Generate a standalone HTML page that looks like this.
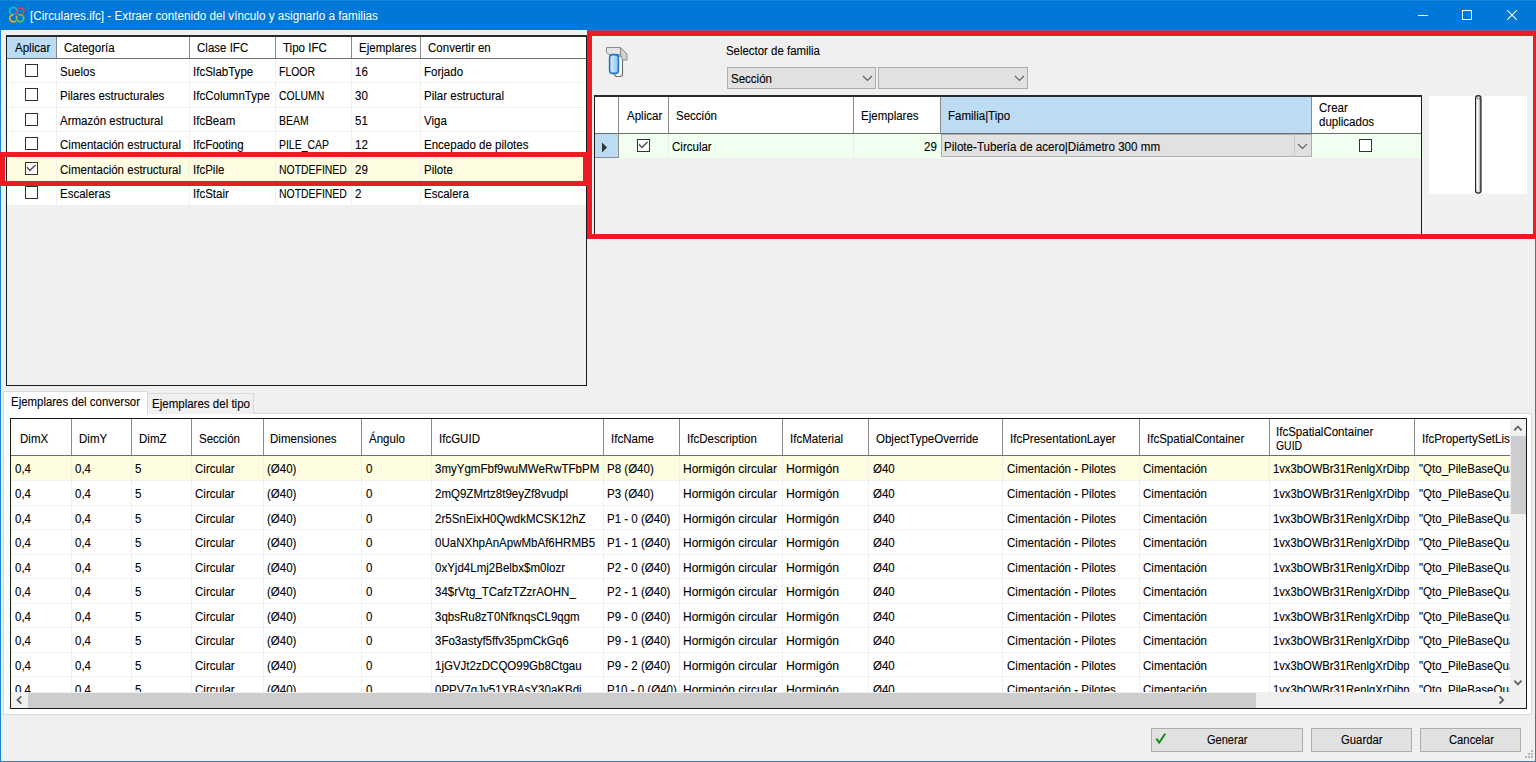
<!DOCTYPE html><html><head><meta charset="utf-8"><style>

*{box-sizing:border-box;margin:0;padding:0}
html,body{width:1536px;height:762px;overflow:hidden;background:#f0f0f0;font-family:"Liberation Sans", sans-serif;font-size:12px;color:#000}
.abs{position:absolute}
.clip{position:absolute;overflow:hidden}
.t{position:absolute;white-space:nowrap;line-height:14px;transform-origin:0 0;-webkit-text-stroke:0.1px currentColor}
.hl{position:absolute;height:1px}
.vl{position:absolute;width:1px}
.cb{position:absolute;width:13px;height:13px;border:1px solid #333;background:#fff}
.btn{position:absolute;background:#e1e1e1;border:1px solid #adadad;height:24px}

</style></head><body>
<div class="abs" style="left:0;top:0;width:1536px;height:30px;background:#0078d7"></div>
<div class="abs" style="left:0;top:0;width:1536px;height:1px;background:#1a85d9"></div>
<svg class="abs" style="left:0;top:0" width="30" height="30" viewBox="0 0 30 30"><path d="M10.64 13.41A3.6 3.6 0 1 1 15.95 13.65" fill="none" stroke="#1cb4d6" stroke-width="1.7" stroke-linecap="round"/><path d="M18.18 8.49A3.6 3.6 0 1 1 19.80 14.96" fill="none" stroke="#df3f3f" stroke-width="1.7" stroke-linecap="round"/><path d="M17.18 13.20A3.6 3.6 0 0 1 16.70 11.53" fill="none" stroke="#df3f3f" stroke-width="1.7" stroke-linecap="round"/><path d="M15.47 21.08A3.6 3.6 0 1 1 13.49 14.60" fill="none" stroke="#f0a626" stroke-width="1.7" stroke-linecap="round"/><path d="M16.42 16.40A3.6 3.6 0 0 1 16.82 17.45" fill="none" stroke="#f0a626" stroke-width="1.7" stroke-linecap="round"/><path d="M18.85 14.86A3.6 3.6 0 1 1 16.61 18.45" fill="none" stroke="#6cbf45" stroke-width="1.7" stroke-linecap="round"/></svg>
<div class="t" style="left:30.00px;top:9px;color:#fff;transform:scaleX(0.975);-webkit-text-stroke:0;">[Circulares.ifc] - Extraer contenido del vínculo y asignarlo a familias</div>
<div class="abs" style="left:1418px;top:15px;width:10px;height:1px;background:#fff"></div>
<div class="abs" style="left:1462px;top:10px;width:10px;height:10px;border:1px solid #fff"></div>
<svg class="abs" style="left:1507px;top:10px" width="10" height="10" viewBox="0 0 10 10"><path d="M0 0L10 10M10 0L0 10" stroke="#fff" stroke-width="1.1"/></svg>
<div class="abs" style="left:0;top:30px;width:1px;height:732px;background:#1883d7"></div>
<div class="abs" style="left:1535px;top:30px;width:1px;height:732px;background:#1883d7"></div>
<div class="abs" style="left:0;top:761px;width:1536px;height:1px;background:#1883d7"></div>
<div class="abs" style="left:6px;top:35px;width:581px;height:351px;background:#f0f0f0;border:1px solid #1a1a1a;border-top:2px solid #2a2a2a"></div>
<div class="abs" style="left:7px;top:37px;width:579px;height:21px;background:#fff"></div>
<div class="abs" style="left:7px;top:37px;width:49px;height:21px;background:#bcdcf4"></div>
<div class="hl" style="left:7px;top:58px;width:579px;background:#6d6d6d"></div>
<div class="vl" style="left:56px;top:37px;height:21px;background:#8a8a8a"></div>
<div class="vl" style="left:189px;top:37px;height:21px;background:#8a8a8a"></div>
<div class="vl" style="left:275px;top:37px;height:21px;background:#8a8a8a"></div>
<div class="vl" style="left:351px;top:37px;height:21px;background:#8a8a8a"></div>
<div class="vl" style="left:420px;top:37px;height:21px;background:#8a8a8a"></div>
<div class="abs" style="left:7px;top:59px;width:579px;height:23px;background:#fff"></div>
<div class="hl" style="left:7px;top:82px;width:579px;background:#f0f0f0"></div>
<div class="vl" style="left:56px;top:59px;height:23px;background:#f0f0f0"></div>
<div class="vl" style="left:189px;top:59px;height:23px;background:#f0f0f0"></div>
<div class="vl" style="left:275px;top:59px;height:23px;background:#f0f0f0"></div>
<div class="vl" style="left:351px;top:59px;height:23px;background:#f0f0f0"></div>
<div class="vl" style="left:420px;top:59px;height:23px;background:#f0f0f0"></div>
<div class="cb" style="left:25px;top:64px"></div>
<div class="abs" style="left:7px;top:83px;width:579px;height:24px;background:#fff"></div>
<div class="hl" style="left:7px;top:107px;width:579px;background:#f0f0f0"></div>
<div class="vl" style="left:56px;top:83px;height:24px;background:#f0f0f0"></div>
<div class="vl" style="left:189px;top:83px;height:24px;background:#f0f0f0"></div>
<div class="vl" style="left:275px;top:83px;height:24px;background:#f0f0f0"></div>
<div class="vl" style="left:351px;top:83px;height:24px;background:#f0f0f0"></div>
<div class="vl" style="left:420px;top:83px;height:24px;background:#f0f0f0"></div>
<div class="cb" style="left:25px;top:88px"></div>
<div class="abs" style="left:7px;top:108px;width:579px;height:23px;background:#fff"></div>
<div class="hl" style="left:7px;top:131px;width:579px;background:#f0f0f0"></div>
<div class="vl" style="left:56px;top:108px;height:23px;background:#f0f0f0"></div>
<div class="vl" style="left:189px;top:108px;height:23px;background:#f0f0f0"></div>
<div class="vl" style="left:275px;top:108px;height:23px;background:#f0f0f0"></div>
<div class="vl" style="left:351px;top:108px;height:23px;background:#f0f0f0"></div>
<div class="vl" style="left:420px;top:108px;height:23px;background:#f0f0f0"></div>
<div class="cb" style="left:25px;top:113px"></div>
<div class="abs" style="left:7px;top:132px;width:579px;height:24px;background:#fff"></div>
<div class="hl" style="left:7px;top:156px;width:579px;background:#f0f0f0"></div>
<div class="vl" style="left:56px;top:132px;height:24px;background:#f0f0f0"></div>
<div class="vl" style="left:189px;top:132px;height:24px;background:#f0f0f0"></div>
<div class="vl" style="left:275px;top:132px;height:24px;background:#f0f0f0"></div>
<div class="vl" style="left:351px;top:132px;height:24px;background:#f0f0f0"></div>
<div class="vl" style="left:420px;top:132px;height:24px;background:#f0f0f0"></div>
<div class="cb" style="left:25px;top:137px"></div>
<div class="abs" style="left:7px;top:157px;width:579px;height:23px;background:#fffde1"></div>
<div class="hl" style="left:7px;top:180px;width:579px;background:#f0f0f0"></div>
<div class="vl" style="left:56px;top:157px;height:23px;background:#f0f0f0"></div>
<div class="vl" style="left:189px;top:157px;height:23px;background:#f0f0f0"></div>
<div class="vl" style="left:275px;top:157px;height:23px;background:#f0f0f0"></div>
<div class="vl" style="left:351px;top:157px;height:23px;background:#f0f0f0"></div>
<div class="vl" style="left:420px;top:157px;height:23px;background:#f0f0f0"></div>
<div class="cb" style="left:25px;top:162px"></div>
<svg class="abs" style="left:25px;top:162px" width="13" height="13"><path d="M2 5.2L4.9 8.4L10.6 3" fill="none" stroke="#555" stroke-width="1.5"/></svg>
<div class="abs" style="left:7px;top:181px;width:579px;height:24px;background:#fff"></div>
<div class="hl" style="left:7px;top:205px;width:579px;background:#f0f0f0"></div>
<div class="vl" style="left:56px;top:181px;height:24px;background:#f0f0f0"></div>
<div class="vl" style="left:189px;top:181px;height:24px;background:#f0f0f0"></div>
<div class="vl" style="left:275px;top:181px;height:24px;background:#f0f0f0"></div>
<div class="vl" style="left:351px;top:181px;height:24px;background:#f0f0f0"></div>
<div class="vl" style="left:420px;top:181px;height:24px;background:#f0f0f0"></div>
<div class="cb" style="left:25px;top:186px"></div>
<div class="clip" style="left:7px;top:37px;width:49px;height:168px">
<div class="t" style="left:8.00px;top:4px;transform:scaleX(0.960);">Aplicar</div>
</div>
<div class="clip" style="left:56px;top:37px;width:133px;height:168px">
<div class="t" style="left:8.00px;top:4px;transform:scaleX(0.960);">Categoría</div>
<div class="t" style="left:4.00px;top:28px;transform:scaleX(0.960);">Suelos</div>
<div class="t" style="left:4.00px;top:52px;transform:scaleX(0.960);">Pilares estructurales</div>
<div class="t" style="left:4.00px;top:77px;transform:scaleX(0.960);">Armazón estructural</div>
<div class="t" style="left:4.00px;top:101px;transform:scaleX(0.960);">Cimentación estructural</div>
<div class="t" style="left:4.00px;top:126px;transform:scaleX(0.960);">Cimentación estructural</div>
<div class="t" style="left:4.00px;top:150px;transform:scaleX(0.960);">Escaleras</div>
</div>
<div class="clip" style="left:189px;top:37px;width:86px;height:168px">
<div class="t" style="left:8.00px;top:4px;transform:scaleX(0.960);">Clase IFC</div>
<div class="t" style="left:4.00px;top:28px;transform:scaleX(0.960);">IfcSlabType</div>
<div class="t" style="left:4.00px;top:52px;transform:scaleX(0.960);">IfcColumnType</div>
<div class="t" style="left:4.00px;top:77px;transform:scaleX(0.960);">IfcBeam</div>
<div class="t" style="left:4.00px;top:101px;transform:scaleX(0.960);">IfcFooting</div>
<div class="t" style="left:4.00px;top:126px;transform:scaleX(0.960);">IfcPile</div>
<div class="t" style="left:4.00px;top:150px;transform:scaleX(0.960);">IfcStair</div>
</div>
<div class="clip" style="left:275px;top:37px;width:76px;height:168px">
<div class="t" style="left:8.00px;top:4px;transform:scaleX(0.960);">Tipo IFC</div>
<div class="t" style="left:4.00px;top:28px;transform:scaleX(0.870);">FLOOR</div>
<div class="t" style="left:4.00px;top:52px;transform:scaleX(0.870);">COLUMN</div>
<div class="t" style="left:4.00px;top:77px;transform:scaleX(0.870);">BEAM</div>
<div class="t" style="left:4.00px;top:101px;transform:scaleX(0.870);">PILE_CAP</div>
<div class="t" style="left:4.00px;top:126px;transform:scaleX(0.870);">NOTDEFINED</div>
<div class="t" style="left:4.00px;top:150px;transform:scaleX(0.870);">NOTDEFINED</div>
</div>
<div class="clip" style="left:351px;top:37px;width:69px;height:168px">
<div class="t" style="left:8.00px;top:4px;transform:scaleX(0.960);">Ejemplares</div>
<div class="t" style="left:4.00px;top:28px;transform:scaleX(0.960);">16</div>
<div class="t" style="left:4.00px;top:52px;transform:scaleX(0.960);">30</div>
<div class="t" style="left:4.00px;top:77px;transform:scaleX(0.960);">51</div>
<div class="t" style="left:4.00px;top:101px;transform:scaleX(0.960);">12</div>
<div class="t" style="left:4.00px;top:126px;transform:scaleX(0.960);">29</div>
<div class="t" style="left:4.00px;top:150px;transform:scaleX(0.960);">2</div>
</div>
<div class="clip" style="left:420px;top:37px;width:166px;height:168px">
<div class="t" style="left:8.00px;top:4px;transform:scaleX(0.960);">Convertir en</div>
<div class="t" style="left:4.00px;top:28px;transform:scaleX(0.960);">Forjado</div>
<div class="t" style="left:4.00px;top:52px;transform:scaleX(0.960);">Pilar estructural</div>
<div class="t" style="left:4.00px;top:77px;transform:scaleX(0.960);">Viga</div>
<div class="t" style="left:4.00px;top:101px;transform:scaleX(0.960);">Encepado de pilotes</div>
<div class="t" style="left:4.00px;top:126px;transform:scaleX(0.960);">Pilote</div>
<div class="t" style="left:4.00px;top:150px;transform:scaleX(0.960);">Escalera</div>
</div>
<div class="abs" style="left:0;top:152px;width:588px;height:34px;border:5px solid #ed1c24"></div>
<svg class="abs" style="left:600px;top:42px" width="32" height="40" viewBox="0 0 32 40">
<defs><linearGradient id="pg" x1="0" x2="1" y1="0" y2="0"><stop offset="0" stop-color="#dff1fb"/><stop offset="0.5" stop-color="#b3daf1"/><stop offset="1" stop-color="#8cc3e8"/></linearGradient></defs>
<rect x="14.5" y="14" width="8" height="20.5" rx="2.5" fill="#f6f6f6" stroke="#6a6a6a" stroke-width="1.1"/>
<path d="M20.5 5.5 L27 12 L27 18 L22.5 18 L20.5 13 Z" fill="#d0d0d0" stroke="#8c8c8c" stroke-width="1"/>
<path d="M6.5 5.5 L20.5 5.5 L20.5 12.5 L10 13 L6.5 10.5 Z" fill="#e4e4e4" stroke="#8c8c8c" stroke-width="1"/>
<rect x="9.6" y="12.6" width="8.8" height="18.8" rx="3" fill="url(#pg)" stroke="#1f74c9" stroke-width="1.6"/>
</svg>
<div class="t" style="left:726.00px;top:44px;transform:scaleX(0.952);">Selector de familia</div>
<div class="abs" style="left:727px;top:67px;width:149px;height:22px;background:#e1e1e1;border:1px solid #adadad"></div>
<div class="t" style="left:731.00px;top:72px;transform:scaleX(0.960);">Sección</div>
<svg class="abs" style="left:862px;top:75px" width="11" height="7"><path d="M1 1L5.5 5.5L10 1" fill="none" stroke="#606060" stroke-width="1.2"/></svg>
<div class="abs" style="left:878px;top:67px;width:150px;height:22px;background:#e1e1e1;border:1px solid #adadad"></div>
<svg class="abs" style="left:1014px;top:75px" width="11" height="7"><path d="M1 1L5.5 5.5L10 1" fill="none" stroke="#606060" stroke-width="1.2"/></svg>
<div class="abs" style="left:594px;top:95px;width:828px;height:142px;background:#f0f0f0;border:1px solid #1a1a1a;border-top:2px solid #2a2a2a"></div>
<div class="abs" style="left:595px;top:97px;width:826px;height:36px;background:#fff"></div>
<div class="abs" style="left:941px;top:97px;width:370px;height:36px;background:#bcdcf4"></div>
<div class="hl" style="left:595px;top:133px;width:826px;background:#6d6d6d"></div>
<div class="vl" style="left:618px;top:97px;height:36px;background:#8a8a8a"></div>
<div class="vl" style="left:668px;top:97px;height:36px;background:#8a8a8a"></div>
<div class="vl" style="left:853px;top:97px;height:36px;background:#8a8a8a"></div>
<div class="vl" style="left:940px;top:97px;height:36px;background:#8a8a8a"></div>
<div class="vl" style="left:1311px;top:97px;height:36px;background:#8a8a8a"></div>
<div class="t" style="left:627.00px;top:109px;transform:scaleX(0.960);">Aplicar</div>
<div class="t" style="left:676.00px;top:109px;transform:scaleX(0.960);">Sección</div>
<div class="t" style="left:861.00px;top:109px;transform:scaleX(0.960);">Ejemplares</div>
<div class="t" style="left:948.00px;top:109px;transform:scaleX(0.960);">Familia|Tipo</div>
<div class="t" style="left:1319.00px;top:101px;transform:scaleX(0.960);">Crear</div>
<div class="t" style="left:1319.00px;top:115px;transform:scaleX(0.960);">duplicados</div>
<div class="abs" style="left:595px;top:134px;width:826px;height:24px;background:#f0fff0"></div>
<div class="abs" style="left:595px;top:134px;width:24px;height:24px;background:#bcdcf4;border-right:1px solid #8a8a8a;border-bottom:1px solid #8a8a8a"></div>
<svg class="abs" style="left:601px;top:142px" width="8" height="11"><path d="M1 0.5L6 5.5L1 10.5Z" fill="#333"/></svg>
<div class="vl" style="left:668px;top:134px;height:24px;background:#e6f2e6"></div>
<div class="vl" style="left:853px;top:134px;height:24px;background:#e6f2e6"></div>
<div class="cb" style="left:637px;top:139px"></div>
<svg class="abs" style="left:637px;top:139px" width="13" height="13"><path d="M2 5.2L4.9 8.4L10.6 3" fill="none" stroke="#555" stroke-width="1.5"/></svg>
<div class="t" style="left:672.00px;top:140px;transform:scaleX(0.960);">Circular</div>
<div class="t" style="left:923.67px;top:140px;transform:scaleX(0.960);">29</div>
<div class="abs" style="left:941px;top:134px;width:371px;height:23px;background:#e1e1e1;border:1px solid #adadad"></div>
<div class="abs" style="left:1294px;top:134px;width:18px;height:23px;border-left:1px solid #c8c8c8"></div>
<svg class="abs" style="left:1297px;top:143px" width="11" height="7"><path d="M1 1L5.5 5.5L10 1" fill="none" stroke="#606060" stroke-width="1.1"/></svg>
<div class="t" style="left:944.00px;top:140px;transform:scaleX(0.967);">Pilote-Tubería de acero|Diámetro 300 mm</div>
<div class="cb" style="left:1359px;top:139px"></div>
<div class="abs" style="left:1429px;top:96px;width:98px;height:98px;background:#fff"></div>
<svg class="abs" style="left:1470px;top:90px" width="16" height="108" viewBox="0 0 16 108">
<defs><linearGradient id="cg" x1="0" x2="1"><stop offset="0" stop-color="#fff"/><stop offset="0.45" stop-color="#fafafa"/><stop offset="0.85" stop-color="#a8a8a8"/><stop offset="1" stop-color="#555"/></linearGradient></defs>
<rect x="5.6" y="5.6" width="5.4" height="97.6" rx="2.7" fill="url(#cg)" stroke="#262626" stroke-width="1.2"/>
<ellipse cx="8.3" cy="7.6" rx="1.6" ry="1.3" fill="#fff" stroke="#555" stroke-width="0.9"/>
</svg>
<div class="abs" style="left:587px;top:31px;width:951px;height:208px;border:5px solid #ed1c24"></div>
<div class="abs" style="left:587px;top:30px;width:949px;height:1px;background:#9a4a8a"></div>
<div class="abs" style="left:3px;top:413px;width:1529px;height:302px;background:#fff;border:1px solid #d9d9d9"></div>
<div class="abs" style="left:147px;top:393px;width:107px;height:21px;background:#f0f0f0;border:1px solid #d9d9d9;border-bottom:none"></div>
<div class="abs" style="left:3px;top:391px;width:145px;height:24px;background:#fff;border:1px solid #d9d9d9;border-bottom:none"></div>
<div class="t" style="left:11.00px;top:395px;transform:scaleX(0.953);">Ejemplares del conversor</div>
<div class="t" style="left:152.00px;top:397px;transform:scaleX(0.960);">Ejemplares del tipo</div>
<div class="abs" style="left:10px;top:418px;width:1517px;height:291px;background:#fff;border:1px solid #1a1a1a;overflow:hidden">
<div class="hl" style="left:0;top:36px;width:1499px;background:#6d6d6d"></div>
<div class="vl" style="left:60px;top:0;height:36px;background:#8a8a8a"></div>
<div class="vl" style="left:120px;top:0;height:36px;background:#8a8a8a"></div>
<div class="vl" style="left:180px;top:0;height:36px;background:#8a8a8a"></div>
<div class="vl" style="left:252px;top:0;height:36px;background:#8a8a8a"></div>
<div class="vl" style="left:350px;top:0;height:36px;background:#8a8a8a"></div>
<div class="vl" style="left:420px;top:0;height:36px;background:#8a8a8a"></div>
<div class="vl" style="left:592px;top:0;height:36px;background:#8a8a8a"></div>
<div class="vl" style="left:668px;top:0;height:36px;background:#8a8a8a"></div>
<div class="vl" style="left:771px;top:0;height:36px;background:#8a8a8a"></div>
<div class="vl" style="left:857px;top:0;height:36px;background:#8a8a8a"></div>
<div class="vl" style="left:991px;top:0;height:36px;background:#8a8a8a"></div>
<div class="vl" style="left:1128px;top:0;height:36px;background:#8a8a8a"></div>
<div class="vl" style="left:1258px;top:0;height:36px;background:#8a8a8a"></div>
<div class="vl" style="left:1403px;top:0;height:36px;background:#8a8a8a"></div>
<div class="abs" style="left:0;top:37px;width:1499px;height:24px;background:#fffde1"></div>
<div class="hl" style="left:0;top:61px;width:1499px;background:#f0f0f0"></div>
<div class="vl" style="left:60px;top:37px;height:24px;background:#f0f0f0"></div>
<div class="vl" style="left:120px;top:37px;height:24px;background:#f0f0f0"></div>
<div class="vl" style="left:180px;top:37px;height:24px;background:#f0f0f0"></div>
<div class="vl" style="left:252px;top:37px;height:24px;background:#f0f0f0"></div>
<div class="vl" style="left:350px;top:37px;height:24px;background:#f0f0f0"></div>
<div class="vl" style="left:420px;top:37px;height:24px;background:#f0f0f0"></div>
<div class="vl" style="left:592px;top:37px;height:24px;background:#f0f0f0"></div>
<div class="vl" style="left:668px;top:37px;height:24px;background:#f0f0f0"></div>
<div class="vl" style="left:771px;top:37px;height:24px;background:#f0f0f0"></div>
<div class="vl" style="left:857px;top:37px;height:24px;background:#f0f0f0"></div>
<div class="vl" style="left:991px;top:37px;height:24px;background:#f0f0f0"></div>
<div class="vl" style="left:1128px;top:37px;height:24px;background:#f0f0f0"></div>
<div class="vl" style="left:1258px;top:37px;height:24px;background:#f0f0f0"></div>
<div class="vl" style="left:1403px;top:37px;height:24px;background:#f0f0f0"></div>
<div class="abs" style="left:0;top:62px;width:1499px;height:24px;background:#fff"></div>
<div class="hl" style="left:0;top:86px;width:1499px;background:#f0f0f0"></div>
<div class="vl" style="left:60px;top:62px;height:24px;background:#f0f0f0"></div>
<div class="vl" style="left:120px;top:62px;height:24px;background:#f0f0f0"></div>
<div class="vl" style="left:180px;top:62px;height:24px;background:#f0f0f0"></div>
<div class="vl" style="left:252px;top:62px;height:24px;background:#f0f0f0"></div>
<div class="vl" style="left:350px;top:62px;height:24px;background:#f0f0f0"></div>
<div class="vl" style="left:420px;top:62px;height:24px;background:#f0f0f0"></div>
<div class="vl" style="left:592px;top:62px;height:24px;background:#f0f0f0"></div>
<div class="vl" style="left:668px;top:62px;height:24px;background:#f0f0f0"></div>
<div class="vl" style="left:771px;top:62px;height:24px;background:#f0f0f0"></div>
<div class="vl" style="left:857px;top:62px;height:24px;background:#f0f0f0"></div>
<div class="vl" style="left:991px;top:62px;height:24px;background:#f0f0f0"></div>
<div class="vl" style="left:1128px;top:62px;height:24px;background:#f0f0f0"></div>
<div class="vl" style="left:1258px;top:62px;height:24px;background:#f0f0f0"></div>
<div class="vl" style="left:1403px;top:62px;height:24px;background:#f0f0f0"></div>
<div class="abs" style="left:0;top:87px;width:1499px;height:23px;background:#fff"></div>
<div class="hl" style="left:0;top:110px;width:1499px;background:#f0f0f0"></div>
<div class="vl" style="left:60px;top:87px;height:23px;background:#f0f0f0"></div>
<div class="vl" style="left:120px;top:87px;height:23px;background:#f0f0f0"></div>
<div class="vl" style="left:180px;top:87px;height:23px;background:#f0f0f0"></div>
<div class="vl" style="left:252px;top:87px;height:23px;background:#f0f0f0"></div>
<div class="vl" style="left:350px;top:87px;height:23px;background:#f0f0f0"></div>
<div class="vl" style="left:420px;top:87px;height:23px;background:#f0f0f0"></div>
<div class="vl" style="left:592px;top:87px;height:23px;background:#f0f0f0"></div>
<div class="vl" style="left:668px;top:87px;height:23px;background:#f0f0f0"></div>
<div class="vl" style="left:771px;top:87px;height:23px;background:#f0f0f0"></div>
<div class="vl" style="left:857px;top:87px;height:23px;background:#f0f0f0"></div>
<div class="vl" style="left:991px;top:87px;height:23px;background:#f0f0f0"></div>
<div class="vl" style="left:1128px;top:87px;height:23px;background:#f0f0f0"></div>
<div class="vl" style="left:1258px;top:87px;height:23px;background:#f0f0f0"></div>
<div class="vl" style="left:1403px;top:87px;height:23px;background:#f0f0f0"></div>
<div class="abs" style="left:0;top:111px;width:1499px;height:24px;background:#fff"></div>
<div class="hl" style="left:0;top:135px;width:1499px;background:#f0f0f0"></div>
<div class="vl" style="left:60px;top:111px;height:24px;background:#f0f0f0"></div>
<div class="vl" style="left:120px;top:111px;height:24px;background:#f0f0f0"></div>
<div class="vl" style="left:180px;top:111px;height:24px;background:#f0f0f0"></div>
<div class="vl" style="left:252px;top:111px;height:24px;background:#f0f0f0"></div>
<div class="vl" style="left:350px;top:111px;height:24px;background:#f0f0f0"></div>
<div class="vl" style="left:420px;top:111px;height:24px;background:#f0f0f0"></div>
<div class="vl" style="left:592px;top:111px;height:24px;background:#f0f0f0"></div>
<div class="vl" style="left:668px;top:111px;height:24px;background:#f0f0f0"></div>
<div class="vl" style="left:771px;top:111px;height:24px;background:#f0f0f0"></div>
<div class="vl" style="left:857px;top:111px;height:24px;background:#f0f0f0"></div>
<div class="vl" style="left:991px;top:111px;height:24px;background:#f0f0f0"></div>
<div class="vl" style="left:1128px;top:111px;height:24px;background:#f0f0f0"></div>
<div class="vl" style="left:1258px;top:111px;height:24px;background:#f0f0f0"></div>
<div class="vl" style="left:1403px;top:111px;height:24px;background:#f0f0f0"></div>
<div class="abs" style="left:0;top:136px;width:1499px;height:23px;background:#fff"></div>
<div class="hl" style="left:0;top:159px;width:1499px;background:#f0f0f0"></div>
<div class="vl" style="left:60px;top:136px;height:23px;background:#f0f0f0"></div>
<div class="vl" style="left:120px;top:136px;height:23px;background:#f0f0f0"></div>
<div class="vl" style="left:180px;top:136px;height:23px;background:#f0f0f0"></div>
<div class="vl" style="left:252px;top:136px;height:23px;background:#f0f0f0"></div>
<div class="vl" style="left:350px;top:136px;height:23px;background:#f0f0f0"></div>
<div class="vl" style="left:420px;top:136px;height:23px;background:#f0f0f0"></div>
<div class="vl" style="left:592px;top:136px;height:23px;background:#f0f0f0"></div>
<div class="vl" style="left:668px;top:136px;height:23px;background:#f0f0f0"></div>
<div class="vl" style="left:771px;top:136px;height:23px;background:#f0f0f0"></div>
<div class="vl" style="left:857px;top:136px;height:23px;background:#f0f0f0"></div>
<div class="vl" style="left:991px;top:136px;height:23px;background:#f0f0f0"></div>
<div class="vl" style="left:1128px;top:136px;height:23px;background:#f0f0f0"></div>
<div class="vl" style="left:1258px;top:136px;height:23px;background:#f0f0f0"></div>
<div class="vl" style="left:1403px;top:136px;height:23px;background:#f0f0f0"></div>
<div class="abs" style="left:0;top:160px;width:1499px;height:24px;background:#fff"></div>
<div class="hl" style="left:0;top:184px;width:1499px;background:#f0f0f0"></div>
<div class="vl" style="left:60px;top:160px;height:24px;background:#f0f0f0"></div>
<div class="vl" style="left:120px;top:160px;height:24px;background:#f0f0f0"></div>
<div class="vl" style="left:180px;top:160px;height:24px;background:#f0f0f0"></div>
<div class="vl" style="left:252px;top:160px;height:24px;background:#f0f0f0"></div>
<div class="vl" style="left:350px;top:160px;height:24px;background:#f0f0f0"></div>
<div class="vl" style="left:420px;top:160px;height:24px;background:#f0f0f0"></div>
<div class="vl" style="left:592px;top:160px;height:24px;background:#f0f0f0"></div>
<div class="vl" style="left:668px;top:160px;height:24px;background:#f0f0f0"></div>
<div class="vl" style="left:771px;top:160px;height:24px;background:#f0f0f0"></div>
<div class="vl" style="left:857px;top:160px;height:24px;background:#f0f0f0"></div>
<div class="vl" style="left:991px;top:160px;height:24px;background:#f0f0f0"></div>
<div class="vl" style="left:1128px;top:160px;height:24px;background:#f0f0f0"></div>
<div class="vl" style="left:1258px;top:160px;height:24px;background:#f0f0f0"></div>
<div class="vl" style="left:1403px;top:160px;height:24px;background:#f0f0f0"></div>
<div class="abs" style="left:0;top:185px;width:1499px;height:23px;background:#fff"></div>
<div class="hl" style="left:0;top:208px;width:1499px;background:#f0f0f0"></div>
<div class="vl" style="left:60px;top:185px;height:23px;background:#f0f0f0"></div>
<div class="vl" style="left:120px;top:185px;height:23px;background:#f0f0f0"></div>
<div class="vl" style="left:180px;top:185px;height:23px;background:#f0f0f0"></div>
<div class="vl" style="left:252px;top:185px;height:23px;background:#f0f0f0"></div>
<div class="vl" style="left:350px;top:185px;height:23px;background:#f0f0f0"></div>
<div class="vl" style="left:420px;top:185px;height:23px;background:#f0f0f0"></div>
<div class="vl" style="left:592px;top:185px;height:23px;background:#f0f0f0"></div>
<div class="vl" style="left:668px;top:185px;height:23px;background:#f0f0f0"></div>
<div class="vl" style="left:771px;top:185px;height:23px;background:#f0f0f0"></div>
<div class="vl" style="left:857px;top:185px;height:23px;background:#f0f0f0"></div>
<div class="vl" style="left:991px;top:185px;height:23px;background:#f0f0f0"></div>
<div class="vl" style="left:1128px;top:185px;height:23px;background:#f0f0f0"></div>
<div class="vl" style="left:1258px;top:185px;height:23px;background:#f0f0f0"></div>
<div class="vl" style="left:1403px;top:185px;height:23px;background:#f0f0f0"></div>
<div class="abs" style="left:0;top:209px;width:1499px;height:24px;background:#fff"></div>
<div class="hl" style="left:0;top:233px;width:1499px;background:#f0f0f0"></div>
<div class="vl" style="left:60px;top:209px;height:24px;background:#f0f0f0"></div>
<div class="vl" style="left:120px;top:209px;height:24px;background:#f0f0f0"></div>
<div class="vl" style="left:180px;top:209px;height:24px;background:#f0f0f0"></div>
<div class="vl" style="left:252px;top:209px;height:24px;background:#f0f0f0"></div>
<div class="vl" style="left:350px;top:209px;height:24px;background:#f0f0f0"></div>
<div class="vl" style="left:420px;top:209px;height:24px;background:#f0f0f0"></div>
<div class="vl" style="left:592px;top:209px;height:24px;background:#f0f0f0"></div>
<div class="vl" style="left:668px;top:209px;height:24px;background:#f0f0f0"></div>
<div class="vl" style="left:771px;top:209px;height:24px;background:#f0f0f0"></div>
<div class="vl" style="left:857px;top:209px;height:24px;background:#f0f0f0"></div>
<div class="vl" style="left:991px;top:209px;height:24px;background:#f0f0f0"></div>
<div class="vl" style="left:1128px;top:209px;height:24px;background:#f0f0f0"></div>
<div class="vl" style="left:1258px;top:209px;height:24px;background:#f0f0f0"></div>
<div class="vl" style="left:1403px;top:209px;height:24px;background:#f0f0f0"></div>
<div class="abs" style="left:0;top:234px;width:1499px;height:23px;background:#fff"></div>
<div class="hl" style="left:0;top:257px;width:1499px;background:#f0f0f0"></div>
<div class="vl" style="left:60px;top:234px;height:23px;background:#f0f0f0"></div>
<div class="vl" style="left:120px;top:234px;height:23px;background:#f0f0f0"></div>
<div class="vl" style="left:180px;top:234px;height:23px;background:#f0f0f0"></div>
<div class="vl" style="left:252px;top:234px;height:23px;background:#f0f0f0"></div>
<div class="vl" style="left:350px;top:234px;height:23px;background:#f0f0f0"></div>
<div class="vl" style="left:420px;top:234px;height:23px;background:#f0f0f0"></div>
<div class="vl" style="left:592px;top:234px;height:23px;background:#f0f0f0"></div>
<div class="vl" style="left:668px;top:234px;height:23px;background:#f0f0f0"></div>
<div class="vl" style="left:771px;top:234px;height:23px;background:#f0f0f0"></div>
<div class="vl" style="left:857px;top:234px;height:23px;background:#f0f0f0"></div>
<div class="vl" style="left:991px;top:234px;height:23px;background:#f0f0f0"></div>
<div class="vl" style="left:1128px;top:234px;height:23px;background:#f0f0f0"></div>
<div class="vl" style="left:1258px;top:234px;height:23px;background:#f0f0f0"></div>
<div class="vl" style="left:1403px;top:234px;height:23px;background:#f0f0f0"></div>
<div class="abs" style="left:0;top:258px;width:1499px;height:24px;background:#fff"></div>
<div class="hl" style="left:0;top:282px;width:1499px;background:#f0f0f0"></div>
<div class="vl" style="left:60px;top:258px;height:24px;background:#f0f0f0"></div>
<div class="vl" style="left:120px;top:258px;height:24px;background:#f0f0f0"></div>
<div class="vl" style="left:180px;top:258px;height:24px;background:#f0f0f0"></div>
<div class="vl" style="left:252px;top:258px;height:24px;background:#f0f0f0"></div>
<div class="vl" style="left:350px;top:258px;height:24px;background:#f0f0f0"></div>
<div class="vl" style="left:420px;top:258px;height:24px;background:#f0f0f0"></div>
<div class="vl" style="left:592px;top:258px;height:24px;background:#f0f0f0"></div>
<div class="vl" style="left:668px;top:258px;height:24px;background:#f0f0f0"></div>
<div class="vl" style="left:771px;top:258px;height:24px;background:#f0f0f0"></div>
<div class="vl" style="left:857px;top:258px;height:24px;background:#f0f0f0"></div>
<div class="vl" style="left:991px;top:258px;height:24px;background:#f0f0f0"></div>
<div class="vl" style="left:1128px;top:258px;height:24px;background:#f0f0f0"></div>
<div class="vl" style="left:1258px;top:258px;height:24px;background:#f0f0f0"></div>
<div class="vl" style="left:1403px;top:258px;height:24px;background:#f0f0f0"></div>
<div class="abs" style="left:0;top:283px;width:1499px;height:24px;background:#fff"></div>
<div class="hl" style="left:0;top:307px;width:1499px;background:#f0f0f0"></div>
<div class="vl" style="left:60px;top:283px;height:24px;background:#f0f0f0"></div>
<div class="vl" style="left:120px;top:283px;height:24px;background:#f0f0f0"></div>
<div class="vl" style="left:180px;top:283px;height:24px;background:#f0f0f0"></div>
<div class="vl" style="left:252px;top:283px;height:24px;background:#f0f0f0"></div>
<div class="vl" style="left:350px;top:283px;height:24px;background:#f0f0f0"></div>
<div class="vl" style="left:420px;top:283px;height:24px;background:#f0f0f0"></div>
<div class="vl" style="left:592px;top:283px;height:24px;background:#f0f0f0"></div>
<div class="vl" style="left:668px;top:283px;height:24px;background:#f0f0f0"></div>
<div class="vl" style="left:771px;top:283px;height:24px;background:#f0f0f0"></div>
<div class="vl" style="left:857px;top:283px;height:24px;background:#f0f0f0"></div>
<div class="vl" style="left:991px;top:283px;height:24px;background:#f0f0f0"></div>
<div class="vl" style="left:1128px;top:283px;height:24px;background:#f0f0f0"></div>
<div class="vl" style="left:1258px;top:283px;height:24px;background:#f0f0f0"></div>
<div class="vl" style="left:1403px;top:283px;height:24px;background:#f0f0f0"></div>
<div class="clip" style="left:0px;top:0;width:60px;height:273px">
<div class="t" style="left:9.00px;top:13px;transform:scaleX(0.960);">DimX</div>
<div class="t" style="left:4.00px;top:43px;transform:scaleX(0.960);">0,4</div>
<div class="t" style="left:4.00px;top:68px;transform:scaleX(0.960);">0,4</div>
<div class="t" style="left:4.00px;top:93px;transform:scaleX(0.960);">0,4</div>
<div class="t" style="left:4.00px;top:117px;transform:scaleX(0.960);">0,4</div>
<div class="t" style="left:4.00px;top:142px;transform:scaleX(0.960);">0,4</div>
<div class="t" style="left:4.00px;top:166px;transform:scaleX(0.960);">0,4</div>
<div class="t" style="left:4.00px;top:191px;transform:scaleX(0.960);">0,4</div>
<div class="t" style="left:4.00px;top:215px;transform:scaleX(0.960);">0,4</div>
<div class="t" style="left:4.00px;top:240px;transform:scaleX(0.960);">0,4</div>
<div class="t" style="left:4.00px;top:264px;transform:scaleX(0.960);">0,4</div>
</div>
<div class="clip" style="left:60px;top:0;width:60px;height:273px">
<div class="t" style="left:8.00px;top:13px;transform:scaleX(0.960);">DimY</div>
<div class="t" style="left:4.00px;top:43px;transform:scaleX(0.960);">0,4</div>
<div class="t" style="left:4.00px;top:68px;transform:scaleX(0.960);">0,4</div>
<div class="t" style="left:4.00px;top:93px;transform:scaleX(0.960);">0,4</div>
<div class="t" style="left:4.00px;top:117px;transform:scaleX(0.960);">0,4</div>
<div class="t" style="left:4.00px;top:142px;transform:scaleX(0.960);">0,4</div>
<div class="t" style="left:4.00px;top:166px;transform:scaleX(0.960);">0,4</div>
<div class="t" style="left:4.00px;top:191px;transform:scaleX(0.960);">0,4</div>
<div class="t" style="left:4.00px;top:215px;transform:scaleX(0.960);">0,4</div>
<div class="t" style="left:4.00px;top:240px;transform:scaleX(0.960);">0,4</div>
<div class="t" style="left:4.00px;top:264px;transform:scaleX(0.960);">0,4</div>
</div>
<div class="clip" style="left:120px;top:0;width:60px;height:273px">
<div class="t" style="left:8.00px;top:13px;transform:scaleX(0.960);">DimZ</div>
<div class="t" style="left:4.00px;top:43px;transform:scaleX(0.960);">5</div>
<div class="t" style="left:4.00px;top:68px;transform:scaleX(0.960);">5</div>
<div class="t" style="left:4.00px;top:93px;transform:scaleX(0.960);">5</div>
<div class="t" style="left:4.00px;top:117px;transform:scaleX(0.960);">5</div>
<div class="t" style="left:4.00px;top:142px;transform:scaleX(0.960);">5</div>
<div class="t" style="left:4.00px;top:166px;transform:scaleX(0.960);">5</div>
<div class="t" style="left:4.00px;top:191px;transform:scaleX(0.960);">5</div>
<div class="t" style="left:4.00px;top:215px;transform:scaleX(0.960);">5</div>
<div class="t" style="left:4.00px;top:240px;transform:scaleX(0.960);">5</div>
<div class="t" style="left:4.00px;top:264px;transform:scaleX(0.960);">5</div>
</div>
<div class="clip" style="left:180px;top:0;width:72px;height:273px">
<div class="t" style="left:8.00px;top:13px;transform:scaleX(0.960);">Sección</div>
<div class="t" style="left:4.00px;top:43px;transform:scaleX(0.960);">Circular</div>
<div class="t" style="left:4.00px;top:68px;transform:scaleX(0.960);">Circular</div>
<div class="t" style="left:4.00px;top:93px;transform:scaleX(0.960);">Circular</div>
<div class="t" style="left:4.00px;top:117px;transform:scaleX(0.960);">Circular</div>
<div class="t" style="left:4.00px;top:142px;transform:scaleX(0.960);">Circular</div>
<div class="t" style="left:4.00px;top:166px;transform:scaleX(0.960);">Circular</div>
<div class="t" style="left:4.00px;top:191px;transform:scaleX(0.960);">Circular</div>
<div class="t" style="left:4.00px;top:215px;transform:scaleX(0.960);">Circular</div>
<div class="t" style="left:4.00px;top:240px;transform:scaleX(0.960);">Circular</div>
<div class="t" style="left:4.00px;top:264px;transform:scaleX(0.960);">Circular</div>
</div>
<div class="clip" style="left:252px;top:0;width:98px;height:273px">
<div class="t" style="left:7.00px;top:13px;transform:scaleX(0.960);">Dimensiones</div>
<div class="t" style="left:4.00px;top:43px;transform:scaleX(0.960);">(Ø40)</div>
<div class="t" style="left:4.00px;top:68px;transform:scaleX(0.960);">(Ø40)</div>
<div class="t" style="left:4.00px;top:93px;transform:scaleX(0.960);">(Ø40)</div>
<div class="t" style="left:4.00px;top:117px;transform:scaleX(0.960);">(Ø40)</div>
<div class="t" style="left:4.00px;top:142px;transform:scaleX(0.960);">(Ø40)</div>
<div class="t" style="left:4.00px;top:166px;transform:scaleX(0.960);">(Ø40)</div>
<div class="t" style="left:4.00px;top:191px;transform:scaleX(0.960);">(Ø40)</div>
<div class="t" style="left:4.00px;top:215px;transform:scaleX(0.960);">(Ø40)</div>
<div class="t" style="left:4.00px;top:240px;transform:scaleX(0.960);">(Ø40)</div>
<div class="t" style="left:4.00px;top:264px;transform:scaleX(0.960);">(Ø40)</div>
</div>
<div class="clip" style="left:350px;top:0;width:70px;height:273px">
<div class="t" style="left:8.00px;top:13px;transform:scaleX(0.960);">Ángulo</div>
<div class="t" style="left:5.00px;top:43px;transform:scaleX(0.960);">0</div>
<div class="t" style="left:5.00px;top:68px;transform:scaleX(0.960);">0</div>
<div class="t" style="left:5.00px;top:93px;transform:scaleX(0.960);">0</div>
<div class="t" style="left:5.00px;top:117px;transform:scaleX(0.960);">0</div>
<div class="t" style="left:5.00px;top:142px;transform:scaleX(0.960);">0</div>
<div class="t" style="left:5.00px;top:166px;transform:scaleX(0.960);">0</div>
<div class="t" style="left:5.00px;top:191px;transform:scaleX(0.960);">0</div>
<div class="t" style="left:5.00px;top:215px;transform:scaleX(0.960);">0</div>
<div class="t" style="left:5.00px;top:240px;transform:scaleX(0.960);">0</div>
<div class="t" style="left:5.00px;top:264px;transform:scaleX(0.960);">0</div>
</div>
<div class="clip" style="left:420px;top:0;width:172px;height:273px">
<div class="t" style="left:8.00px;top:13px;transform:scaleX(0.960);">IfcGUID</div>
<div class="t" style="left:4.00px;top:43px;transform:scaleX(0.960);">3myYgmFbf9wuMWeRwTFbPM</div>
<div class="t" style="left:4.00px;top:68px;transform:scaleX(0.960);">2mQ9ZMrtz8t9eyZf8vudpl</div>
<div class="t" style="left:4.00px;top:93px;transform:scaleX(0.960);">2r5SnEixH0QwdkMCSK12hZ</div>
<div class="t" style="left:4.00px;top:117px;transform:scaleX(0.960);">0UaNXhpAnApwMbAf6HRMB5</div>
<div class="t" style="left:4.00px;top:142px;transform:scaleX(0.960);">0xYjd4Lmj2Belbx$m0lozr</div>
<div class="t" style="left:4.00px;top:166px;transform:scaleX(0.960);">34$rVtg_TCafzTZzrAOHN_</div>
<div class="t" style="left:4.00px;top:191px;transform:scaleX(0.960);">3qbsRu8zT0NfknqsCL9qgm</div>
<div class="t" style="left:4.00px;top:215px;transform:scaleX(0.960);">3Fo3astyf5ffv35pmCkGq6</div>
<div class="t" style="left:4.00px;top:240px;transform:scaleX(0.960);">1jGVJt2zDCQO99Gb8Ctgau</div>
<div class="t" style="left:4.00px;top:264px;transform:scaleX(0.960);">0PPV7qJv51YBAsY30aKBdi</div>
</div>
<div class="clip" style="left:592px;top:0;width:76px;height:273px">
<div class="t" style="left:8.00px;top:13px;transform:scaleX(0.960);">IfcName</div>
<div class="t" style="left:4.00px;top:43px;transform:scaleX(0.960);">P8 (Ø40)</div>
<div class="t" style="left:4.00px;top:68px;transform:scaleX(0.960);">P3 (Ø40)</div>
<div class="t" style="left:4.00px;top:93px;transform:scaleX(0.960);">P1 - 0 (Ø40)</div>
<div class="t" style="left:4.00px;top:117px;transform:scaleX(0.960);">P1 - 1 (Ø40)</div>
<div class="t" style="left:4.00px;top:142px;transform:scaleX(0.960);">P2 - 0 (Ø40)</div>
<div class="t" style="left:4.00px;top:166px;transform:scaleX(0.960);">P2 - 1 (Ø40)</div>
<div class="t" style="left:4.00px;top:191px;transform:scaleX(0.960);">P9 - 0 (Ø40)</div>
<div class="t" style="left:4.00px;top:215px;transform:scaleX(0.960);">P9 - 1 (Ø40)</div>
<div class="t" style="left:4.00px;top:240px;transform:scaleX(0.960);">P9 - 2 (Ø40)</div>
<div class="t" style="left:4.00px;top:264px;transform:scaleX(0.960);">P10 - 0 (Ø40)</div>
</div>
<div class="clip" style="left:668px;top:0;width:103px;height:273px">
<div class="t" style="left:8.00px;top:13px;transform:scaleX(0.960);">IfcDescription</div>
<div class="t" style="left:4.00px;top:43px;">Hormigón circular</div>
<div class="t" style="left:4.00px;top:68px;">Hormigón circular</div>
<div class="t" style="left:4.00px;top:93px;">Hormigón circular</div>
<div class="t" style="left:4.00px;top:117px;">Hormigón circular</div>
<div class="t" style="left:4.00px;top:142px;">Hormigón circular</div>
<div class="t" style="left:4.00px;top:166px;">Hormigón circular</div>
<div class="t" style="left:4.00px;top:191px;">Hormigón circular</div>
<div class="t" style="left:4.00px;top:215px;">Hormigón circular</div>
<div class="t" style="left:4.00px;top:240px;">Hormigón circular</div>
<div class="t" style="left:4.00px;top:264px;">Hormigón circular</div>
</div>
<div class="clip" style="left:771px;top:0;width:86px;height:273px">
<div class="t" style="left:8.00px;top:13px;transform:scaleX(0.960);">IfcMaterial</div>
<div class="t" style="left:4.00px;top:43px;transform:scaleX(1.020);">Hormigón</div>
<div class="t" style="left:4.00px;top:68px;transform:scaleX(1.020);">Hormigón</div>
<div class="t" style="left:4.00px;top:93px;transform:scaleX(1.020);">Hormigón</div>
<div class="t" style="left:4.00px;top:117px;transform:scaleX(1.020);">Hormigón</div>
<div class="t" style="left:4.00px;top:142px;transform:scaleX(1.020);">Hormigón</div>
<div class="t" style="left:4.00px;top:166px;transform:scaleX(1.020);">Hormigón</div>
<div class="t" style="left:4.00px;top:191px;transform:scaleX(1.020);">Hormigón</div>
<div class="t" style="left:4.00px;top:215px;transform:scaleX(1.020);">Hormigón</div>
<div class="t" style="left:4.00px;top:240px;transform:scaleX(1.020);">Hormigón</div>
<div class="t" style="left:4.00px;top:264px;transform:scaleX(1.020);">Hormigón</div>
</div>
<div class="clip" style="left:857px;top:0;width:134px;height:273px">
<div class="t" style="left:8.00px;top:13px;transform:scaleX(0.960);">ObjectTypeOverride</div>
<div class="t" style="left:5.00px;top:43px;transform:scaleX(0.960);">Ø40</div>
<div class="t" style="left:5.00px;top:68px;transform:scaleX(0.960);">Ø40</div>
<div class="t" style="left:5.00px;top:93px;transform:scaleX(0.960);">Ø40</div>
<div class="t" style="left:5.00px;top:117px;transform:scaleX(0.960);">Ø40</div>
<div class="t" style="left:5.00px;top:142px;transform:scaleX(0.960);">Ø40</div>
<div class="t" style="left:5.00px;top:166px;transform:scaleX(0.960);">Ø40</div>
<div class="t" style="left:5.00px;top:191px;transform:scaleX(0.960);">Ø40</div>
<div class="t" style="left:5.00px;top:215px;transform:scaleX(0.960);">Ø40</div>
<div class="t" style="left:5.00px;top:240px;transform:scaleX(0.960);">Ø40</div>
<div class="t" style="left:5.00px;top:264px;transform:scaleX(0.960);">Ø40</div>
</div>
<div class="clip" style="left:991px;top:0;width:137px;height:273px">
<div class="t" style="left:8.00px;top:13px;transform:scaleX(0.960);">IfcPresentationLayer</div>
<div class="t" style="left:5.00px;top:43px;transform:scaleX(0.960);">Cimentación - Pilotes</div>
<div class="t" style="left:5.00px;top:68px;transform:scaleX(0.960);">Cimentación - Pilotes</div>
<div class="t" style="left:5.00px;top:93px;transform:scaleX(0.960);">Cimentación - Pilotes</div>
<div class="t" style="left:5.00px;top:117px;transform:scaleX(0.960);">Cimentación - Pilotes</div>
<div class="t" style="left:5.00px;top:142px;transform:scaleX(0.960);">Cimentación - Pilotes</div>
<div class="t" style="left:5.00px;top:166px;transform:scaleX(0.960);">Cimentación - Pilotes</div>
<div class="t" style="left:5.00px;top:191px;transform:scaleX(0.960);">Cimentación - Pilotes</div>
<div class="t" style="left:5.00px;top:215px;transform:scaleX(0.960);">Cimentación - Pilotes</div>
<div class="t" style="left:5.00px;top:240px;transform:scaleX(0.960);">Cimentación - Pilotes</div>
<div class="t" style="left:5.00px;top:264px;transform:scaleX(0.960);">Cimentación - Pilotes</div>
</div>
<div class="clip" style="left:1128px;top:0;width:130px;height:273px">
<div class="t" style="left:8.00px;top:13px;transform:scaleX(0.960);">IfcSpatialContainer</div>
<div class="t" style="left:4.00px;top:43px;transform:scaleX(0.960);">Cimentación</div>
<div class="t" style="left:4.00px;top:68px;transform:scaleX(0.960);">Cimentación</div>
<div class="t" style="left:4.00px;top:93px;transform:scaleX(0.960);">Cimentación</div>
<div class="t" style="left:4.00px;top:117px;transform:scaleX(0.960);">Cimentación</div>
<div class="t" style="left:4.00px;top:142px;transform:scaleX(0.960);">Cimentación</div>
<div class="t" style="left:4.00px;top:166px;transform:scaleX(0.960);">Cimentación</div>
<div class="t" style="left:4.00px;top:191px;transform:scaleX(0.960);">Cimentación</div>
<div class="t" style="left:4.00px;top:215px;transform:scaleX(0.960);">Cimentación</div>
<div class="t" style="left:4.00px;top:240px;transform:scaleX(0.960);">Cimentación</div>
<div class="t" style="left:4.00px;top:264px;transform:scaleX(0.960);">Cimentación</div>
</div>
<div class="clip" style="left:1258px;top:0;width:145px;height:273px">
<div class="t" style="left:7.00px;top:6px;transform:scaleX(0.960);">IfcSpatialContainer</div>
<div class="t" style="left:7.00px;top:20px;transform:scaleX(0.870);">GUID</div>
<div class="t" style="left:4.00px;top:43px;transform:scaleX(0.935);">1vx3bOWBr31RenlgXrDibp</div>
<div class="t" style="left:4.00px;top:68px;transform:scaleX(0.935);">1vx3bOWBr31RenlgXrDibp</div>
<div class="t" style="left:4.00px;top:93px;transform:scaleX(0.935);">1vx3bOWBr31RenlgXrDibp</div>
<div class="t" style="left:4.00px;top:117px;transform:scaleX(0.935);">1vx3bOWBr31RenlgXrDibp</div>
<div class="t" style="left:4.00px;top:142px;transform:scaleX(0.935);">1vx3bOWBr31RenlgXrDibp</div>
<div class="t" style="left:4.00px;top:166px;transform:scaleX(0.935);">1vx3bOWBr31RenlgXrDibp</div>
<div class="t" style="left:4.00px;top:191px;transform:scaleX(0.935);">1vx3bOWBr31RenlgXrDibp</div>
<div class="t" style="left:4.00px;top:215px;transform:scaleX(0.935);">1vx3bOWBr31RenlgXrDibp</div>
<div class="t" style="left:4.00px;top:240px;transform:scaleX(0.935);">1vx3bOWBr31RenlgXrDibp</div>
<div class="t" style="left:4.00px;top:264px;transform:scaleX(0.935);">1vx3bOWBr31RenlgXrDibp</div>
</div>
<div class="clip" style="left:1403px;top:0;width:96px;height:273px">
<div class="t" style="left:8.00px;top:13px;transform:scaleX(0.960);">IfcPropertySetList</div>
<div class="t" style="left:5.00px;top:43px;transform:scaleX(0.960);">"Qto_PileBaseQuantities"</div>
<div class="t" style="left:5.00px;top:68px;transform:scaleX(0.960);">"Qto_PileBaseQuantities"</div>
<div class="t" style="left:5.00px;top:93px;transform:scaleX(0.960);">"Qto_PileBaseQuantities"</div>
<div class="t" style="left:5.00px;top:117px;transform:scaleX(0.960);">"Qto_PileBaseQuantities"</div>
<div class="t" style="left:5.00px;top:142px;transform:scaleX(0.960);">"Qto_PileBaseQuantities"</div>
<div class="t" style="left:5.00px;top:166px;transform:scaleX(0.960);">"Qto_PileBaseQuantities"</div>
<div class="t" style="left:5.00px;top:191px;transform:scaleX(0.960);">"Qto_PileBaseQuantities"</div>
<div class="t" style="left:5.00px;top:215px;transform:scaleX(0.960);">"Qto_PileBaseQuantities"</div>
<div class="t" style="left:5.00px;top:240px;transform:scaleX(0.960);">"Qto_PileBaseQuantities"</div>
<div class="t" style="left:5.00px;top:264px;transform:scaleX(0.960);">"Qto_PileBaseQuantities"</div>
</div>
<div class="abs" style="left:1499px;top:0;width:17px;height:273px;background:#f0f0f0"></div>
<div class="abs" style="left:1500px;top:17px;width:15px;height:78px;background:#cdcdcd"></div>
<svg class="abs" style="left:1502px;top:5px" width="10" height="8"><path d="M1.3 6.3L4.9 2.5L8.5 6.3" fill="none" stroke="#606060" stroke-width="1.8"/></svg>
<svg class="abs" style="left:1502px;top:260px" width="10" height="8"><path d="M1.3 1.6L4.9 5.4L8.5 1.6" fill="none" stroke="#606060" stroke-width="1.8"/></svg>
<div class="abs" style="left:0;top:273px;width:1516px;height:17px;background:#f0f0f0"></div>
<div class="abs" style="left:17px;top:274px;width:1228px;height:15px;background:#cdcdcd"></div>
<svg class="abs" style="left:4px;top:276px" width="8" height="10"><path d="M6.2 1.3L2.5 4.9L6.2 8.5" fill="none" stroke="#606060" stroke-width="1.8"/></svg>
<svg class="abs" style="left:1487px;top:276px" width="8" height="10"><path d="M1.5 1.3L5.2 4.9L1.5 8.5" fill="none" stroke="#606060" stroke-width="1.8"/></svg>
</div>
<div class="btn" style="left:1151px;top:728px;width:152px"></div>
<svg class="abs" style="left:1155px;top:732px" width="12" height="13"><path d="M1.3 6.6L4.2 10.6L10.2 1.8" fill="none" stroke="#178c17" stroke-width="2"/></svg>
<div class="t" style="left:1207.00px;top:733px;transform:scaleX(0.920);">Generar</div>
<div class="btn" style="left:1311px;top:728px;width:101px"></div>
<div class="t" style="left:1341.00px;top:733px;transform:scaleX(0.943);">Guardar</div>
<div class="btn" style="left:1420px;top:728px;width:101px"></div>
<div class="t" style="left:1449.00px;top:733px;transform:scaleX(0.937);">Cancelar</div>
<div class="abs" style="left:1531px;top:750px;width:2px;height:2px;background:#b8b8b8"></div>
<div class="abs" style="left:1528px;top:753px;width:2px;height:2px;background:#b8b8b8"></div>
<div class="abs" style="left:1531px;top:753px;width:2px;height:2px;background:#b8b8b8"></div>
<div class="abs" style="left:1525px;top:756px;width:2px;height:2px;background:#b8b8b8"></div>
<div class="abs" style="left:1528px;top:756px;width:2px;height:2px;background:#b8b8b8"></div>
<div class="abs" style="left:1531px;top:756px;width:2px;height:2px;background:#b8b8b8"></div>
</body></html>
